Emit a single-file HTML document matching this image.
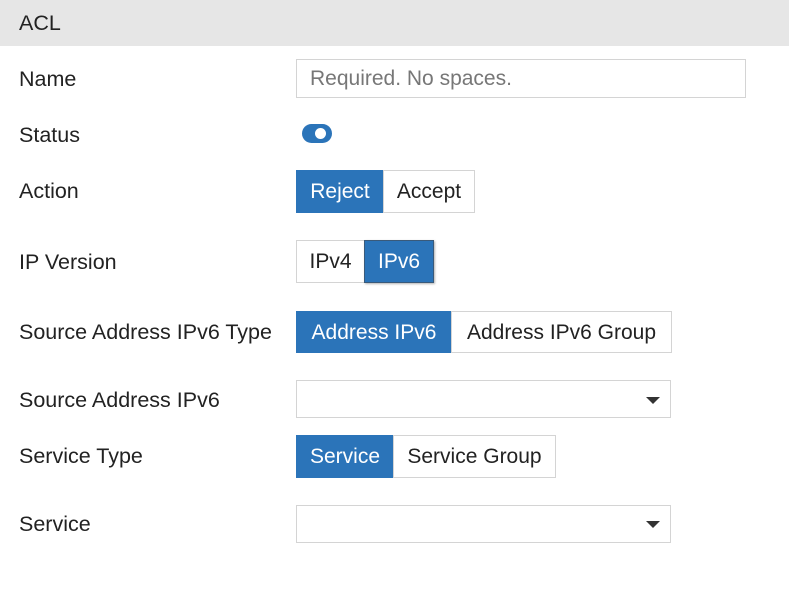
<!DOCTYPE html>
<html><head><style>
body{margin:0;width:789px;height:593px;background:#fff;font-family:"Liberation Sans",sans-serif;color:#222;position:relative;overflow:hidden}
.hd{position:absolute;left:0;top:0;width:789px;height:46px;background:#e6e6e6}
.t{position:absolute;font-size:21.5px;line-height:22px;white-space:nowrap}
.b{position:absolute;box-sizing:border-box;border:1px solid #d4d4d4;background:#fff;font-size:21px;display:flex;align-items:center;justify-content:center;white-space:nowrap;color:#222;padding-top:1px}
.on{background:#2b74b9;border-color:#2b74b9;color:#fff}
.arr{position:absolute;width:0;height:0;border-left:7px solid transparent;border-right:7px solid transparent;border-top:7px solid #333}
</style></head><body>
<div class="hd"></div>
<div class="t" style="left:19px;top:12px">ACL</div>
<div class="t" style="left:19px;top:68px">Name</div>
<div class="t" style="left:19px;top:124px">Status</div>
<div class="t" style="left:19px;top:180px">Action</div>
<div class="t" style="left:19px;top:251px">IP Version</div>
<div class="t" style="left:19px;top:321px">Source Address IPv6 Type</div>
<div class="t" style="left:19px;top:389px">Source Address IPv6</div>
<div class="t" style="left:19px;top:445px">Service Type</div>
<div class="t" style="left:19px;top:513px">Service</div>

<div class="b" style="left:296px;top:59px;width:450px;height:39px;justify-content:flex-start;padding-left:13px;color:#777">Required. No spaces.</div>

<div style="position:absolute;left:302px;top:124px;width:30px;height:19px;border-radius:10px;background:#2b74b9"></div>
<div style="position:absolute;left:315px;top:128px;width:11px;height:11px;border-radius:50%;background:#fff"></div>

<div class="b on" style="left:296px;top:170px;width:88px;height:43px">Reject</div>
<div class="b" style="left:383px;top:170px;width:92px;height:43px">Accept</div>

<div class="b" style="left:296px;top:240px;width:69px;height:43px">IPv4</div>
<div class="b on" style="left:364px;top:240px;width:70px;height:43px;border-color:#3a5a7a;box-shadow:1px 1px 2px rgba(0,0,0,.3)">IPv6</div>

<div class="b on" style="left:296px;top:311px;width:156px;height:42px">Address IPv6</div>
<div class="b" style="left:451px;top:311px;width:221px;height:42px">Address IPv6 Group</div>

<div class="b" style="left:296px;top:380px;width:375px;height:38px"></div>
<div class="arr" style="left:646px;top:397px"></div>

<div class="b on" style="left:296px;top:435px;width:98px;height:43px">Service</div>
<div class="b" style="left:393px;top:435px;width:163px;height:43px">Service Group</div>

<div class="b" style="left:296px;top:505px;width:375px;height:38px"></div>
<div class="arr" style="left:646px;top:521px"></div>
</body></html>
